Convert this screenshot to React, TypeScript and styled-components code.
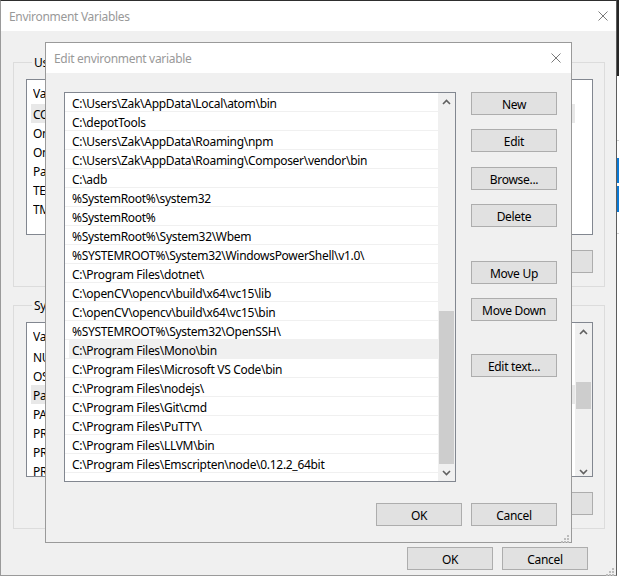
import styled, { createGlobalStyle } from 'styled-components';

const GlobalStyle = createGlobalStyle`
    html, body {
        margin: 0;
        padding: 0;
        background: #ffffff;
    }

    body {
        font-family: 'Noto Sans', 'Segoe UI', sans-serif;
        font-size: 12px;
        letter-spacing: -0.3px;
        color: #000000;
        overflow: hidden;
    }
`;

const Desktop = styled.div`
    position: relative;
    width: 619px;
    height: 586px;
    overflow: hidden;
    background: #ffffff;
`;

const DesktopPatch = styled.div<{ $x: number; $y: number; $w: number; $h: number; $color: string }>`
    position: absolute;
    left: ${(p) => p.$x}px;
    top: ${(p) => p.$y}px;
    width: ${(p) => p.$w}px;
    height: ${(p) => p.$h}px;
    background: ${(p) => p.$color};
`;

const Window = styled.div<{ $x: number; $y: number; $w: number; $h: number }>`
    position: absolute;
    left: ${(p) => p.$x}px;
    top: ${(p) => p.$y}px;
    width: ${(p) => p.$w}px;
    height: ${(p) => p.$h}px;
    box-sizing: border-box;
    border: 1px solid #9a9a9a;
    background: #f0f0f0;
    display: flex;
    flex-direction: column;
`;

const BackWindow = styled(Window)`
    border-top-color: #2e2e2e;
    border-right-color: #5c5c5c;
`;

const TitleBar = styled.div<{ $height: number; $padRight: number }>`
    height: ${(p) => p.$height}px;
    flex: none;
    background: #ffffff;
    display: flex;
    align-items: center;
    justify-content: space-between;
    padding: 0 ${(p) => p.$padRight}px 0 8px;
`;

const TitleText = styled.span`
    color: #999999;
    font-size: 12px;
`;

const CloseIcon = () => (
    <svg width="10" height="10" viewBox="0 0 10 10">
        <path d="M0.5 0.5 L9.5 9.5 M9.5 0.5 L0.5 9.5" stroke="#7a7a7a" strokeWidth="1" fill="none" />
    </svg>
);

const Chevron = ({ up }: { up?: boolean }) => (
    <svg width="9" height="6" viewBox="0 0 9 6">
        <path
            d={up ? 'M1 5 L4.5 1.5 L8 5' : 'M1 1 L4.5 4.5 L8 1'}
            stroke="#606060"
            strokeWidth="1.6"
            fill="none"
        />
    </svg>
);

const Grip = styled.div<{ $right: number; $bottom: number }>`
    position: absolute;
    right: ${(p) => p.$right}px;
    bottom: ${(p) => p.$bottom}px;
    width: 10px;
    height: 10px;
`;

const GripDots = () => (
    <svg width="10" height="10" viewBox="0 0 10 10">
        {[
            [8, 0],
            [8, 3],
            [5, 3],
            [8, 6],
            [5, 6],
            [2, 6],
        ].map(([x, y]) => (
            <rect key={`${x}-${y}`} x={x} y={y + 2} width="2" height="2" fill="#bcbcbc" />
        ))}
    </svg>
);

/* ---------- background window ---------- */

const BackBody = styled.div`
    flex: 1;
    padding: 23px 11px 0 12px;
    display: flex;
    flex-direction: column;
`;

const GroupBox = styled.fieldset<{ $gapTop?: number }>`
    margin: ${(p) => p.$gapTop ?? 0}px 0 0 0;
    padding: 8px 11px 13px 12px;
    border: 1px solid #dcdcdc;
    min-width: 0;
`;

const GroupLegend = styled.legend`
    margin-left: 6px;
    padding: 0 2px;
    font-size: 12px;
    line-height: 17px;
`;

const ListView = styled.div<{ $height: number }>`
    height: ${(p) => p.$height}px;
    box-sizing: border-box;
    border: 1px solid #828790;
    background: #ffffff;
    display: grid;
    grid-template-columns: 1fr 17px;
    overflow: hidden;
`;

const ListViewTable = styled.div`
    display: flex;
    flex-direction: column;
`;

const ListViewHeader = styled.div`
    height: 24px;
    display: flex;
    align-items: center;
    padding: 3px 0 0 6px;
    box-sizing: border-box;
`;

const ListViewRow = styled.div<{ $selected?: boolean }>`
    height: 19px;
    display: flex;
    align-items: center;
    margin-left: 4px;
    padding: 1px 0 0 2px;
    box-sizing: border-box;
    background: ${(p) => (p.$selected ? '#e8e8e8' : 'transparent')};
`;

const ColVariable = styled.span`
    width: 180px;
    white-space: nowrap;
    overflow: hidden;
`;

const ColValue = styled.span`
    white-space: nowrap;
    overflow: hidden;
`;

const ScrollTrack = styled.div<{ $hidden?: boolean }>`
    background: #f0f0f0;
    display: flex;
    flex-direction: column;
    visibility: ${(p) => (p.$hidden ? 'hidden' : 'visible')};
`;

const ScrollArrow = styled.div`
    height: 17px;
    flex: none;
    display: flex;
    align-items: center;
    justify-content: center;
`;

const ScrollSpacer = styled.div<{ $height?: number }>`
    flex: ${(p) => (p.$height === undefined ? 1 : 'none')};
    height: ${(p) => (p.$height === undefined ? 'auto' : `${p.$height}px`)};
`;

const ScrollThumb = styled.div<{ $height: number }>`
    height: ${(p) => p.$height}px;
    flex: none;
    margin: 0 1px;
    background: #cdcdcd;
`;

const ButtonRow = styled.div<{ $gapTop: number; $padRight?: number }>`
    margin-top: ${(p) => p.$gapTop}px;
    padding-right: ${(p) => p.$padRight ?? 0}px;
    display: flex;
    justify-content: flex-end;
    gap: 9px;
`;

const Button = styled.button<{ $gapTop?: number }>`
    width: 86px;
    height: 23px;
    margin-top: ${(p) => p.$gapTop ?? 0}px;
    flex: none;
    box-sizing: border-box;
    padding: 1px 0 0;
    border: 1px solid #adadad;
    background: #e1e1e1;
    color: #000000;
    font-family: 'Noto Sans', 'Segoe UI', sans-serif;
    font-size: 12px;
    letter-spacing: -0.3px;
`;

/* ---------- edit dialog ---------- */

const EditBody = styled.div`
    flex: 1;
    padding: 19px 14px 0 18px;
    display: flex;
    flex-direction: column;
`;

const EditMain = styled.div`
    display: flex;
    gap: 15px;
    align-items: flex-start;
`;

const PathList = styled.div`
    width: 393px;
    height: 390px;
    box-sizing: border-box;
    border: 1px solid #828790;
    background: #ffffff;
    display: grid;
    grid-template-columns: 1fr 17px;
`;

const PathItems = styled.div`
    display: flex;
    flex-direction: column;
`;

const PathRow = styled.div`
    height: 19px;
    box-sizing: border-box;
    border-bottom: 1px solid #f0f0f0;
    padding-left: 4px;
    display: flex;
`;

const PathText = styled.span<{ $selected?: boolean }>`
    flex: 1;
    padding: 3px 0 0 3px;
    line-height: 15px;
    white-space: nowrap;
    overflow: hidden;
    background: ${(p) => (p.$selected ? '#f0f0f0' : 'transparent')};
`;

const ButtonColumn = styled.div`
    display: flex;
    flex-direction: column;
`;

const paths = [
    'C:\\Users\\Zak\\AppData\\Local\\atom\\bin',
    'C:\\depotTools',
    'C:\\Users\\Zak\\AppData\\Roaming\\npm',
    'C:\\Users\\Zak\\AppData\\Roaming\\Composer\\vendor\\bin',
    'C:\\adb',
    '%SystemRoot%\\system32',
    '%SystemRoot%',
    '%SystemRoot%\\System32\\Wbem',
    '%SYSTEMROOT%\\System32\\WindowsPowerShell\\v1.0\\',
    'C:\\Program Files\\dotnet\\',
    'C:\\openCV\\opencv\\build\\x64\\vc15\\lib',
    'C:\\openCV\\opencv\\build\\x64\\vc15\\bin',
    '%SYSTEMROOT%\\System32\\OpenSSH\\',
    'C:\\Program Files\\Mono\\bin',
    'C:\\Program Files\\Microsoft VS Code\\bin',
    'C:\\Program Files\\nodejs\\',
    'C:\\Program Files\\Git\\cmd',
    'C:\\Program Files\\PuTTY\\',
    'C:\\Program Files\\LLVM\\bin',
    'C:\\Program Files\\Emscripten\\node\\0.12.2_64bit',
];

const userVars: [string, string][] = [
    ['COMPOSER_HOME', 'C:\\Users\\Zak\\AppData\\Roaming\\Composer'],
    ['OneDrive', 'C:\\Users\\Zak\\OneDrive'],
    ['OneDriveConsumer', 'C:\\Users\\Zak\\OneDrive'],
    ['Path', 'C:\\Users\\Zak\\AppData\\Local\\atom\\bin;C:\\depotTools'],
    ['TEMP', 'C:\\Users\\Zak\\AppData\\Local\\Temp'],
    ['TMP', 'C:\\Users\\Zak\\AppData\\Local\\Temp'],
];

const systemVars: [string, string][] = [
    ['NUMBER_OF_PROCESSORS', '8'],
    ['OS', 'Windows_NT'],
    ['Path', 'C:\\Program Files\\Mono\\bin;C:\\Program Files\\nodejs\\'],
    ['PATHEXT', '.COM;.EXE;.BAT;.CMD;.VBS;.VBE;.JS;.JSE;.WSF;.WSH;.MSC'],
    ['PROCESSOR_ARCHITECTURE', 'AMD64'],
    ['PROCESSOR_IDENTIFIER', 'Intel64 Family 6 Model 158 Stepping 9'],
    ['PROCESSOR_LEVEL', '6'],
];

const VarList = ({
    rows,
    selected,
    height,
    scroll,
}: {
    rows: [string, string][];
    selected: number;
    height: number;
    scroll?: boolean;
}) => (
    <ListView $height={height}>
        <ListViewTable>
            <ListViewHeader>
                <ColVariable>Variable</ColVariable>
                <ColValue>Value</ColValue>
            </ListViewHeader>
            {rows.map(([name, value], i) => (
                <ListViewRow key={name + i} $selected={i === selected}>
                    <ColVariable>{name}</ColVariable>
                    <ColValue>{value}</ColValue>
                </ListViewRow>
            ))}
        </ListViewTable>
        <ScrollTrack $hidden={!scroll}>
            <ScrollArrow>
                <Chevron up />
            </ScrollArrow>
            <ScrollSpacer $height={42} />
            <ScrollThumb $height={27} />
            <ScrollSpacer />
            <ScrollArrow>
                <Chevron />
            </ScrollArrow>
        </ScrollTrack>
    </ListView>
);

const App = () => {
    return (
        <>
            <GlobalStyle />
            <Desktop>
                <DesktopPatch $x={610} $y={0} $w={9} $h={76} $color="#262626" />
                <DesktopPatch $x={610} $y={140} $w={9} $h={1} $color="#d0d0d0" />
                <DesktopPatch $x={610} $y={158} $w={9} $h={25} $color="#0a78d4" />
                <DesktopPatch $x={610} $y={186} $w={9} $h={26} $color="#0a78d4" />
                <DesktopPatch $x={610} $y={233} $w={9} $h={1} $color="#d0d0d0" />

                <BackWindow $x={0} $y={0} $w={617} $h={576}>
                    <TitleBar $height={30} $padRight={8}>
                        <TitleText>Environment Variables</TitleText>
                        <CloseIcon />
                    </TitleBar>
                    <BackBody>
                        <GroupBox>
                            <GroupLegend>User variables for Zak</GroupLegend>
                            <VarList rows={userVars} selected={0} height={156} />
                            <ButtonRow $gapTop={15}>
                                <Button>New...</Button>
                                <Button>Edit...</Button>
                                <Button>Delete</Button>
                            </ButtonRow>
                        </GroupBox>
                        <GroupBox $gapTop={10}>
                            <GroupLegend>System variables</GroupLegend>
                            <VarList rows={systemVars} selected={2} height={155} scroll />
                            <ButtonRow $gapTop={15}>
                                <Button>New...</Button>
                                <Button>Edit...</Button>
                                <Button>Delete</Button>
                            </ButtonRow>
                        </GroupBox>
                        <ButtonRow $gapTop={18} $padRight={17}>
                            <Button>OK</Button>
                            <Button>Cancel</Button>
                        </ButtonRow>
                    </BackBody>
                    <Grip $right={2} $bottom={2}>
                        <GripDots />
                    </Grip>
                </BackWindow>

                <Window $x={45} $y={42} $w={527} $h={501}>
                    <TitleBar $height={30} $padRight={10}>
                        <TitleText>Edit environment variable</TitleText>
                        <CloseIcon />
                    </TitleBar>
                    <EditBody>
                        <EditMain>
                            <PathList>
                                <PathItems>
                                    {paths.map((path, i) => (
                                        <PathRow key={path}>
                                            <PathText $selected={i === 13}>{path}</PathText>
                                        </PathRow>
                                    ))}
                                </PathItems>
                                <ScrollTrack>
                                    <ScrollArrow>
                                        <Chevron up />
                                    </ScrollArrow>
                                    <ScrollSpacer />
                                    <ScrollThumb $height={153} />
                                    <ScrollArrow>
                                        <Chevron />
                                    </ScrollArrow>
                                </ScrollTrack>
                            </PathList>
                            <ButtonColumn>
                                <Button>New</Button>
                                <Button $gapTop={14}>Edit</Button>
                                <Button $gapTop={15}>Browse...</Button>
                                <Button $gapTop={14}>Delete</Button>
                                <Button $gapTop={34}>Move Up</Button>
                                <Button $gapTop={14}>Move Down</Button>
                                <Button $gapTop={33}>Edit text...</Button>
                            </ButtonColumn>
                        </EditMain>
                        <ButtonRow $gapTop={21}>
                            <Button>OK</Button>
                            <Button>Cancel</Button>
                        </ButtonRow>
                    </EditBody>
                    <Grip $right={2} $bottom={2}>
                        <GripDots />
                    </Grip>
                </Window>
            </Desktop>
        </>
    );
};

export default App;
